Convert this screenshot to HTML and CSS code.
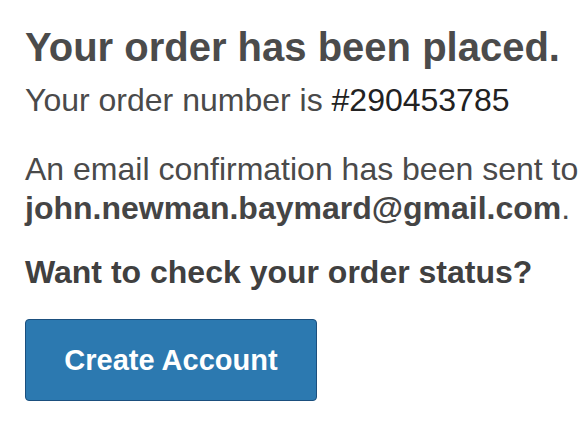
FILE: index.html
```html
<!DOCTYPE html>
<html lang="en">
<head>
<meta charset="utf-8">
<title>Order placed</title>
<link rel="stylesheet" href="styles.css">
</head>
<body>
<main class="confirm">
  <h1 class="title">Your order has been placed.</h1>
  <p class="order-no">Your order number is <span class="num">#290453785</span></p>
  <p class="email">An email confirmation has been sent to <strong>john.newman.baymard@gmail.com</strong>.</p>
  <h2 class="subtitle">Want to check your order status?</h2>
  <button class="btn" type="button">Create Account</button>
</main>
</body>
</html>
```
FILE: styles.css
```css
html, body {
  margin: 0;
  padding: 0;
  background: #ffffff;
}
body {
  font-family: "Liberation Sans", Arial, Helvetica, sans-serif;
  color: #4a4a4a;
}
.confirm {
  padding: 24px 0 0 25px;
  width: 561px;
}
.title {
  margin: 0;
  font-size: 40px;
  line-height: 46px;
  font-weight: bold;
  color: #4b4b4b;
}
.order-no {
  margin: 10px 0 0;
  font-size: 32px;
  line-height: 40px;
}
.num {
  color: #222222;
}
.email {
  margin: 30px 0 0;
  font-size: 32px;
  line-height: 39px;
}
.email strong {
  font-weight: bold;
  color: #454545;
}
.subtitle {
  margin: 24px 0 0;
  font-size: 32px;
  line-height: 40px;
  font-weight: bold;
  color: #404040;
}
.btn {
  display: block;
  margin-top: 27px;
  width: 292px;
  height: 82px;
  background: #2c79b0;
  border: 1px solid #1b4f7e;
  border-radius: 4px;
  color: #ffffff;
  font-family: "Liberation Sans", Arial, Helvetica, sans-serif;
  font-size: 29px;
  font-weight: bold;
  padding: 0;
}
```
